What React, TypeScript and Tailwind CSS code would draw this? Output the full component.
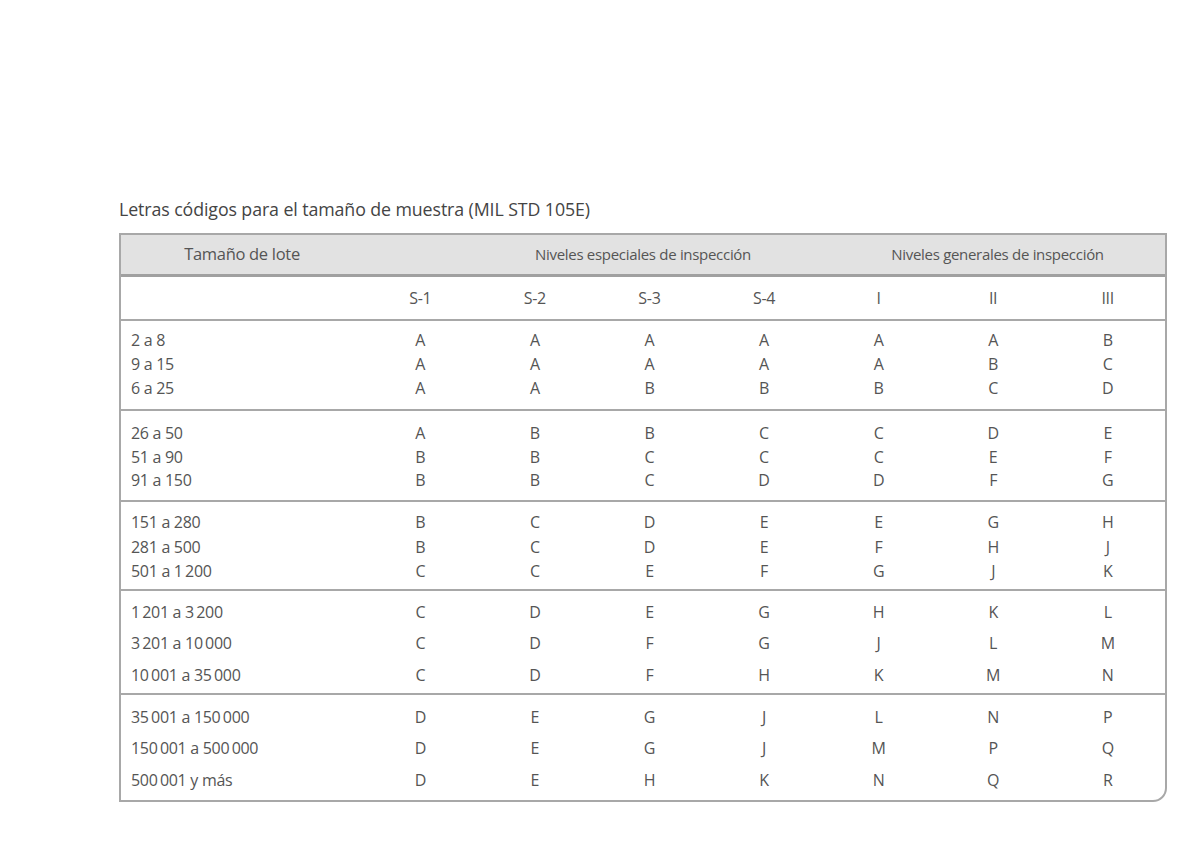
import React from "react";

const t = "\u2009";

const groups: { rows: [string, string[]][]; cls: string; rowH: string }[] = [
  {
    cls: "h-[90px] pt-[7px]",
    rowH: "h-[24px]",
    rows: [
      ["2 a 8", ["A", "A", "A", "A", "A", "A", "B"]],
      ["9 a 15", ["A", "A", "A", "A", "A", "B", "C"]],
      ["6 a 25", ["A", "A", "B", "B", "B", "C", "D"]],
    ],
  },
  {
    cls: "h-[91px] pt-[10px]",
    rowH: "h-[23.5px]",
    rows: [
      ["26 a 50", ["A", "B", "B", "C", "C", "D", "E"]],
      ["51 a 90", ["B", "B", "C", "C", "C", "E", "F"]],
      ["91 a 150", ["B", "B", "C", "D", "D", "F", "G"]],
    ],
  },
  {
    cls: "h-[89px] pt-[8px]",
    rowH: "h-[24.5px]",
    rows: [
      ["151 a 280", ["B", "C", "D", "E", "E", "G", "H"]],
      ["281 a 500", ["B", "C", "D", "E", "F", "H", "J"]],
      [`501 a 1${t}200`, ["C", "C", "E", "F", "G", "J", "K"]],
    ],
  },
  {
    cls: "h-[104px] pt-[5px]",
    rowH: "h-[31.5px]",
    rows: [
      [`1${t}201 a 3${t}200`, ["C", "D", "E", "G", "H", "K", "L"]],
      [`3${t}201 a 10${t}000`, ["C", "D", "F", "G", "J", "L", "M"]],
      [`10${t}001 a 35${t}000`, ["C", "D", "F", "H", "K", "M", "N"]],
    ],
  },
  {
    cls: "h-[105px] pt-[6px]",
    rowH: "h-[31.5px]",
    rows: [
      [`35${t}001 a 150${t}000`, ["D", "E", "G", "J", "L", "N", "P"]],
      [`150${t}001 a 500${t}000`, ["D", "E", "G", "J", "M", "P", "Q"]],
      [`500${t}001 y más`, ["D", "E", "H", "K", "N", "Q", "R"]],
    ],
  },
];

const grid = "grid grid-cols-[242px_repeat(7,1fr)]";

export default function App() {
  return (
    <div
      className="w-[1200px] h-[849px] bg-white text-[#555]"
      style={{ fontFamily: '"Open Sans", "Liberation Sans", sans-serif' }}
    >
      <div className="pt-[196px] pl-[119px] w-[1167px]">
        <div className="text-[17.8px] leading-[26px] text-[#444] tracking-[-0.1px] mb-[11px]">
          Letras códigos para el tamaño de muestra (MIL STD 105E)
        </div>
        <div className="border-2 border-[#a8a8a8] rounded-br-[14px] text-[16px] tracking-[-0.3px]">
          <div className={`${grid} h-[42px] bg-[#e2e2e2] border-b-[3px] border-[#a0a0a0] items-center`}>
            <div className="text-center text-[16.5px]">Tamaño de lote</div>
            <div className="col-span-4 pl-[172px] text-[15px]">Niveles especiales de inspección</div>
            <div className="col-span-3 pl-[70px] text-[15px]">Niveles generales de inspección</div>
          </div>
          <div className={`${grid} h-[44px] items-center border-b-2 border-[#a8a8a8]`}>
            <div />
            {["S-1", "S-2", "S-3", "S-4", "I", "II", "III"].map((h) => (
              <div key={h} className="text-center">
                {h}
              </div>
            ))}
          </div>
          {groups.map((g, gi) => (
            <div
              key={gi}
              className={`${gi < groups.length - 1 ? "border-b-2 border-[#a8a8a8]" : ""} ${g.cls}`}
            >
              {g.rows.map(([label, vals]) => (
                <div key={label} className={`${grid} items-center ${g.rowH}`}>
                  <div className="pl-[10px] whitespace-nowrap">{label}</div>
                  {vals.map((v, i) => (
                    <div key={i} className="text-center">
                      {v}
                    </div>
                  ))}
                </div>
              ))}
            </div>
          ))}
        </div>
      </div>
    </div>
  );
}
